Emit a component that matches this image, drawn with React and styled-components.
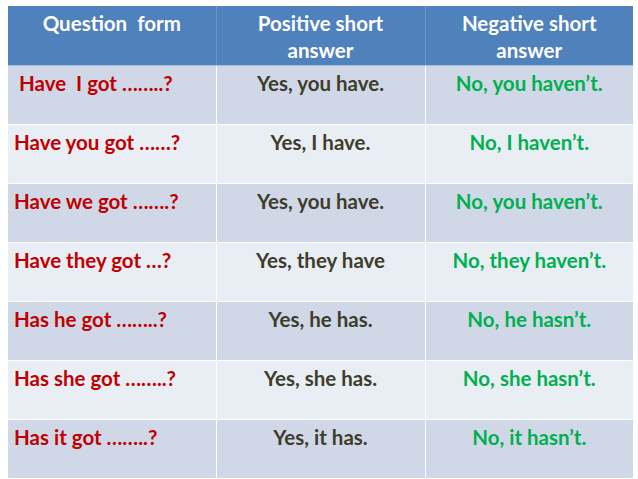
import React from 'react';
import styled, { createGlobalStyle } from 'styled-components';

const rows = [
  { q: '\u00a0Have  I got ……..?', pos: 'Yes, you have.', neg: 'No, you haven’t.' },
  { q: 'Have you got ……?', pos: 'Yes, I have.', neg: 'No, I haven’t.' },
  { q: 'Have we got …….?', pos: 'Yes, you have.', neg: 'No, you haven’t.' },
  { q: 'Have they got …?', pos: 'Yes, they have', neg: 'No, they haven’t.' },
  { q: 'Has he got ……..?', pos: 'Yes, he has.', neg: 'No, he hasn’t.' },
  { q: 'Has she got ……..?', pos: 'Yes, she has.', neg: 'No, she hasn’t.' },
  { q: 'Has it got ……..?', pos: 'Yes, it has.', neg: 'No, it hasn’t.' },
];

const App = () => {
  return (
    <>
      <GlobalStyle />
      <Page>
        <Table>
          <colgroup>
            <col style={{ width: '208px' }} />
            <col style={{ width: '209px' }} />
            <col style={{ width: '208px' }} />
          </colgroup>
          <thead>
            <tr>
              <Head>Question&nbsp; form</Head>
              <Head>
                Positive short
                <br />
                answer
              </Head>
              <Head>
                Negative short
                <br />
                answer
              </Head>
            </tr>
          </thead>
          <tbody>
            {rows.map((r, i) => (
              <Row key={i} odd={i % 2 === 0}>
                <Cell tone="red">{r.q}</Cell>
                <Cell tone="dark" center>
                  {r.pos}
                </Cell>
                <Cell tone="green" center>
                  {r.neg}
                </Cell>
              </Row>
            ))}
          </tbody>
        </Table>
      </Page>
    </>
  );
};

export default App;

const GlobalStyle = createGlobalStyle`
  body {
    margin: 0;
    background: #ffffff;
    font-family: Lato, "Open Sans", sans-serif;
  }
`;

const Page = styled.div`
  width: 638px;
  height: 479px;
  padding: 6px 0 0 8px;
  box-sizing: border-box;
  overflow: hidden;
`;

const Table = styled.table`
  width: 625px;
  border-collapse: collapse;
  table-layout: fixed;
`;

const Head = styled.th`
  height: 59px;
  background: #4f81bd;
  color: #ffffff;
  font-size: 20.5px;
  font-weight: 700;
  line-height: 27px;
  text-align: center;
  vertical-align: top;
  padding: 4px 4px 0;
  border-left: 1px solid #6a93c6;
  border-bottom: 1px solid #a8bfdd;
  box-sizing: border-box;
  white-space: nowrap;
  &:first-child {
    border-left: none;
  }
`;

const Row = styled.tr`
  background: ${({ odd }) => (odd ? '#d0d8e8' : '#e9edf4')};
  border-top: 1px solid #ffffff;
`;

const tones = {
  red: '#c00000',
  dark: '#3d3d2c',
  green: '#00b050',
};

const Cell = styled.td`
  height: 59px;
  box-sizing: border-box;
  vertical-align: top;
  padding: 5px 6px 0;
  font-size: 20.5px;
  font-weight: 700;
  line-height: 24px;
  white-space: pre;
  color: ${({ tone }) => tones[tone]};
  text-align: ${({ center }) => (center ? 'center' : 'left')};
  border-left: 1px solid #ffffff;
  &:first-child {
    border-left: none;
  }
`;
